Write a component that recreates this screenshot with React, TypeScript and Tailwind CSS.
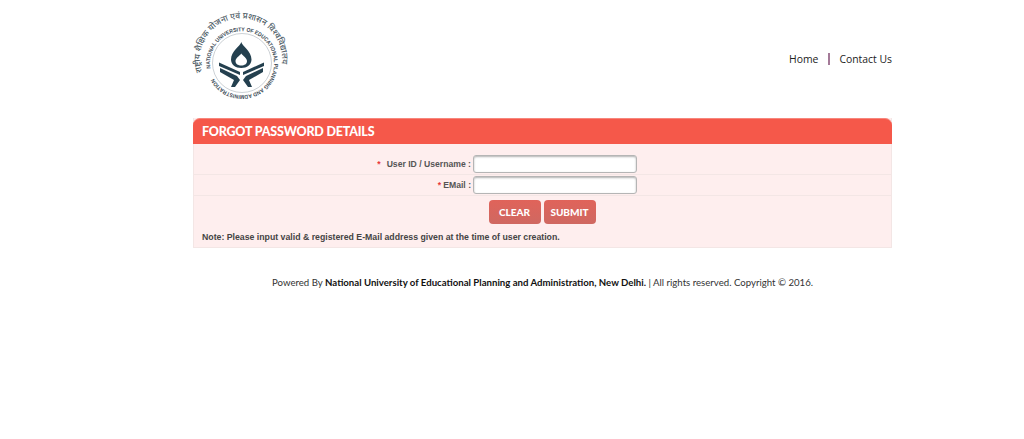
const Logo = () => (
  <svg width="98" height="90" viewBox="0 -1 98 90" className="block overflow-visible">
    <defs>
      <path id="outerArc" d="M 9 56 A 41 41 0 1 1 87 56" fill="none" />
      <path id="innerRing" d="M 17.5 52.4 A 32 32 0 1 1 20.2 61" fill="none" />
    </defs>
    <text fill="#4b5a64" fontSize="8.4" fontFamily="'Noto Sans', sans-serif" fontWeight="500">
      <textPath href="#outerArc" textLength="146" lengthAdjust="spacing">राष्ट्रीय शैक्षिक योजना एवं प्रशासन विश्वविद्यालय</textPath>
    </text>
    <text fill="#3d4c57" fontSize="5.6" fontWeight="700" fontFamily="'Liberation Sans', sans-serif">
      <textPath href="#innerRing" textLength="190" lengthAdjust="spacingAndGlyphs">NATIONAL UNIVERSITY OF EDUCATIONAL PLANNING AND ADMINISTRATION</textPath>
    </text>
    <circle cx="49" cy="47" r="29.5" fill="none" stroke="#aab2b8" strokeWidth="0.6" />
    <g transform="translate(0 -1)">
      <path d="M48.3 27 C47.5 31 38 36 38 44.5 C38 49.5 42.5 53 48.3 53 C54 53 58.5 49.5 58.5 44.5 C58.5 36 49 31 48.3 27 Z M48.3 38.5 C46.5 41 42.5 43 42.5 46 C42.5 49 45 50.5 48.3 50.5 C51.5 50.5 54 49 54 46 C54 43 50 41 48.3 38.5 Z" fill="#24404f" fillRule="evenodd" />
      <path d="M26 47.5 L47 57 L47 60 L26 51 Z" fill="#24404f" />
      <path d="M71 47.5 L50 57 L50 60 L71 51 Z" fill="#24404f" />
      <path d="M27 53 L44 61 L47 65 L42 72 L38 72 L41 65 L27 57 Z" fill="#24404f" />
      <path d="M70 53 L53 61 L50 65 L55 72 L59 72 L56 65 L70 57 Z" fill="#24404f" />
    </g>
  </svg>
);

export default function App() {
  return (
    <div className="min-h-[439px] bg-white font-['Liberation_Sans',Arial,sans-serif]">
      <div className="ml-[193px] w-[699px] pt-[15px]">
        <div className="flex h-[103px] items-start justify-between">
          <Logo />
          <div className="mt-[36px] flex items-center font-['Open_Sans',sans-serif] text-[10.4px] leading-[16px] text-[#222]">
            <span>Home</span>
            <span className="mr-[9px] ml-[10px] h-[12px] w-[2px] bg-[#a47a98]" />
            <span>Contact Us</span>
          </div>
        </div>

        <div className="border-x border-b border-[#f3e6e5] bg-[#feeeee]">
          <div className="-mx-px h-[26px] rounded-t-[7px] border-t border-[#f7867c] bg-[#f5584a] pl-[9px] font-['Lato',sans-serif] text-[12.5px] leading-[25px] font-black tracking-[-0.2px] text-white">
            FORGOT PASSWORD DETAILS
          </div>
          <div className="flex h-[31px] items-end border-b border-[#f3e6e5] pb-[1px]">
            <label className="w-[277px] pb-[2px] text-right text-[8.65px] font-bold text-[#555]">
              <span className="mr-[6px] text-[#e8383a]">*</span>User ID / Username :
            </label>
            <input className="ml-[2px] h-[18px] w-[164px] rounded-[3px] border border-[#b5b5b5] bg-white shadow-[inset_0_1px_2px_rgba(0,0,0,0.3)]" />
          </div>
          <div className="flex h-[21px] items-center border-b border-[#f3e6e5]">
            <label className="w-[277px] text-right text-[8.65px] font-bold text-[#555]">
              <span className="mr-[2px] text-[#e8383a]">*</span>EMail :
            </label>
            <input className="ml-[2px] h-[18px] w-[164px] rounded-[3px] border border-[#b5b5b5] bg-white shadow-[inset_0_1px_2px_rgba(0,0,0,0.3)]" />
          </div>
          <div className="flex justify-center gap-[3px] pt-[4px] pr-[1px]">
            <button className="h-[24px] w-[52px] rounded-[4px] bg-gradient-to-b from-[#e0635a] to-[#cf6861] font-['Lato',sans-serif] text-[10px] font-black text-white">CLEAR</button>
            <button className="h-[24px] w-[52px] rounded-[4px] bg-gradient-to-b from-[#e0635a] to-[#cf6861] font-['Lato',sans-serif] text-[10px] font-black text-white">SUBMIT</button>
          </div>
          <p className="mt-[8px] pb-[4px] pl-[8px] text-[8.74px] leading-[11px] font-bold text-[#444]">
            Note: Please input valid &amp; registered E-Mail address given at the time of user creation.
          </p>
        </div>

        <p className="mt-[26px] pl-[79px] font-['Lato',sans-serif] text-[9.63px] leading-[16px] text-[#333]">
          Powered By <b className="text-[#111]">National University of Educational Planning and Administration, New Delhi.</b> | All rights reserved. Copyright © 2016.
        </p>
      </div>
    </div>
  );
}
